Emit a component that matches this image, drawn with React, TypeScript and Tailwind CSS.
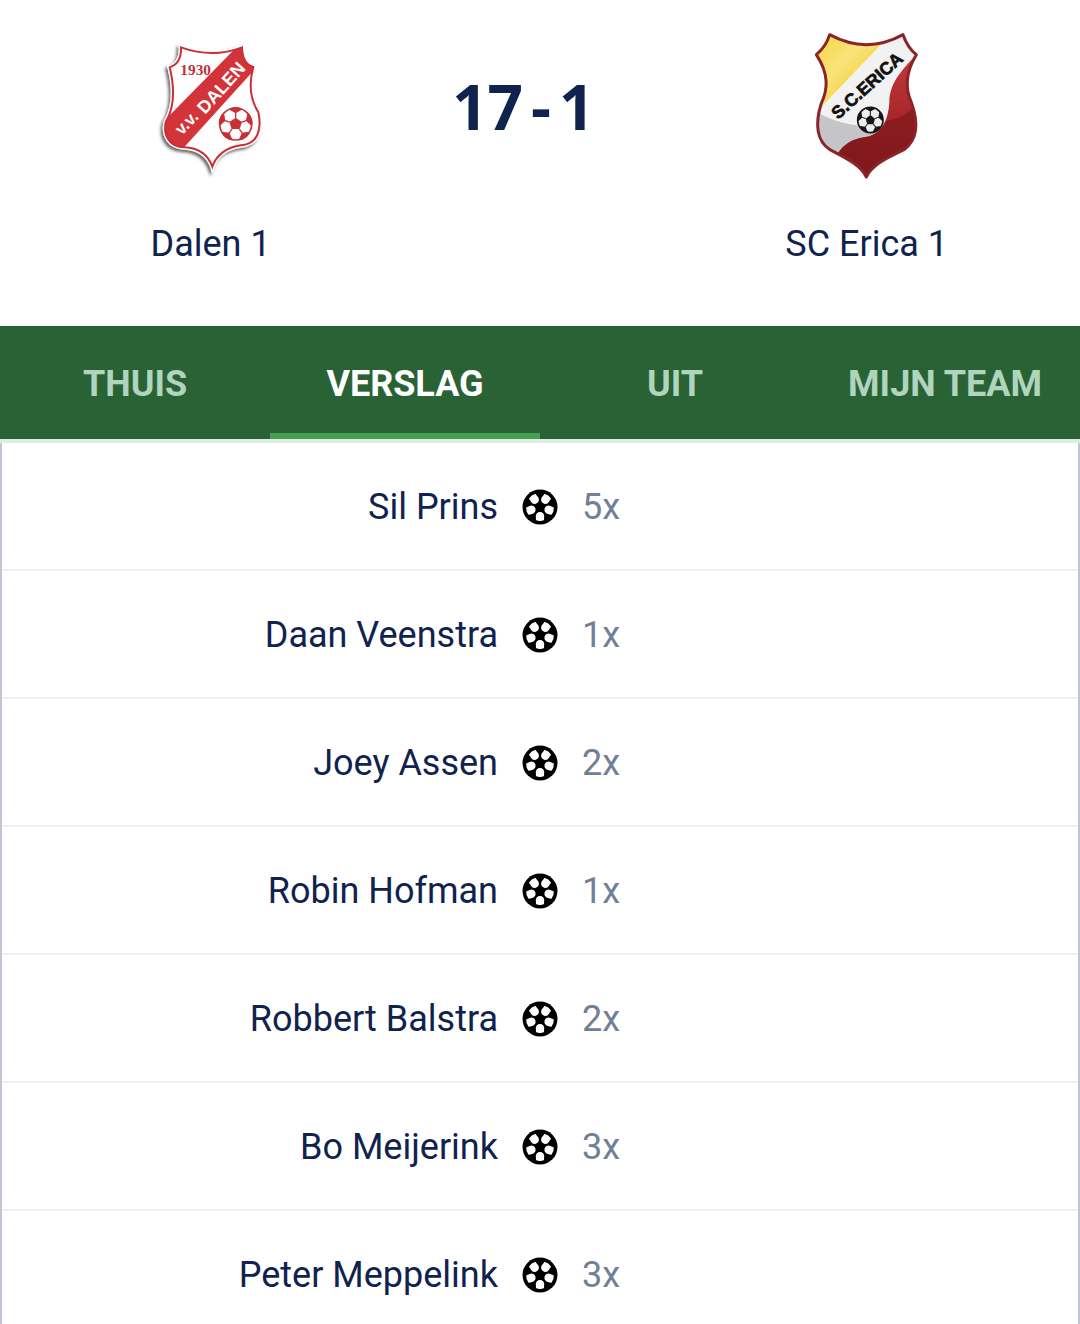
import { useState } from "react";

interface Scorer {
  id: number;
  name: string;
  goals: number;
}

const tabs: string[] = ["Thuis", "Verslag", "Uit", "Mijn team"];

const scorers: Scorer[] = [
  { id: 1, name: "Sil Prins", goals: 5 },
  { id: 2, name: "Daan Veenstra", goals: 1 },
  { id: 3, name: "Joey Assen", goals: 2 },
  { id: 4, name: "Robin Hofman", goals: 1 },
  { id: 5, name: "Robbert Balstra", goals: 2 },
  { id: 6, name: "Bo Meijerink", goals: 3 },
  { id: 7, name: "Peter Meppelink", goals: 3 },
];

const spokes = [0, 72, 144, 216, 288];

const dalenOutline =
  "M90 40 Q185 74 273 40 Q274 90 307 99 C290 160 300 200 322 235 C334 290 318 330 270 334 C225 340 195 365 184 398 C172 365 145 342 100 340 C55 338 36 305 44 265 C68 225 72 165 56 100 Q92 88 90 40Z";

const ericaOutline =
  "M77 32 Q188 92 297 32 Q310 70 337 92 C302 150 306 200 322 235 C345 300 338 350 300 377 C255 400 205 420 187 459 C168 420 120 400 78 377 C38 352 32 300 52 238 C72 195 75 150 37 92 Q66 68 77 32Z";

const DalenLogo = () => (
  <svg viewBox="0 -30 360 480" className="h-40 w-[120px]" role="img" aria-label="Dalen">
    <defs>
      <clipPath id="dalen-shield">
        <path d={dalenOutline} />
      </clipPath>
      <filter id="dalen-shadow" x="-10%" y="-10%" width="120%" height="125%">
        <feDropShadow dx="-6" dy="7" stdDeviation="4" floodColor="#333" floodOpacity="0.75" />
      </filter>
    </defs>
    <path d={dalenOutline} fill="#fff" stroke="#fff" strokeWidth="14" filter="url(#dalen-shadow)" />
    <g clipPath="url(#dalen-shield)">
      <path d="M262 34 L318 99 L94 346 L20 320 L34 266Z" fill="#d3343a" />
    </g>
    <path d={dalenOutline} fill="none" stroke="#c92f36" strokeWidth="6" />
    <text x="88" y="124" fontSize="46" fontWeight="700" fill="#bd343b" fontFamily="Liberation Serif, serif">
      1930
    </text>
    <text
      x="92"
      y="305"
      fontSize="50"
      fontWeight="700"
      fill="#fff"
      fontFamily="Liberation Sans, sans-serif"
      transform="rotate(-45 92 305)"
    >
      v.v.
    </text>
    <text
      x="162"
      y="243"
      fontSize="54"
      fontWeight="700"
      fill="#fff"
      fontFamily="Liberation Sans, sans-serif"
      transform="rotate(-48 162 243)"
    >
      DALEN
    </text>
    <circle cx="254" cy="270" r="48" fill="#fff" stroke="#c92f36" strokeWidth="5" />
    <path d="M254 251 L273 264 L266 285 L242 285 L235 264Z" fill="#c92f36" />
    {spokes.map((angle) => (
      <g key={angle} transform={`rotate(${angle} 254 270)`}>
        <path d="M254 251 V234" stroke="#c92f36" strokeWidth="4" />
        <path d="M236 226 L254 236 L272 226 L268 223 Q254 218 240 223Z" fill="#c92f36" stroke="#c92f36" strokeWidth="3" />
      </g>
    ))}
  </svg>
);

const EricaLogo = () => (
  <svg viewBox="0 0 375 480" className="h-40 w-[125px]" role="img" aria-label="SC Erica">
    <defs>
      <linearGradient id="erica-yellow" x1="0" y1="0" x2="1" y2="1">
        <stop offset="0" stopColor="#f8d32e" />
        <stop offset="0.4" stopColor="#f9e27a" />
        <stop offset="0.7" stopColor="#f4cf2f" />
      </linearGradient>
      <linearGradient id="erica-red" x1="0" y1="0" x2="0" y2="1">
        <stop offset="0" stopColor="#c4393b" />
        <stop offset="0.5" stopColor="#a8272a" />
        <stop offset="1" stopColor="#8e1d20" />
      </linearGradient>
      <clipPath id="erica-shield">
        <path d={ericaOutline} />
      </clipPath>
    </defs>
    <g clipPath="url(#erica-shield)">
      <rect width="375" height="480" fill="#f2f2f2" />
      <path d="M0 0 H290 L60 240 L0 290Z" fill="url(#erica-yellow)" />
      <path d="M30 260 Q95 300 170 305 L240 320 L100 390 L20 380Z" fill="#c5c5c7" />
      <path
        d="M345 85 C290 140 256 180 256 235 C252 300 225 335 180 340 C145 345 120 360 100 390 L187 470 L360 400Z"
        fill="url(#erica-red)"
      />
      <path
        d="M244 292 C230 325 205 338 180 340 C145 345 120 360 100 390 L187 470 L350 400 L345 235 Q300 285 244 292Z"
        fill="#6d1215"
        opacity="0.5"
      />
    </g>
    <path d={ericaOutline} fill="none" stroke="#8b2429" strokeWidth="9" strokeLinejoin="round" />
    <text
      x="102"
      y="288"
      fontSize="53"
      fontWeight="700"
      fill="#111"
      stroke="#111"
      strokeWidth="2"
      fontFamily="Liberation Sans, sans-serif"
      transform="rotate(-42 102 288)"
    >
      S.C.ERICA
    </text>
    <circle cx="199" cy="288" r="38" fill="#eee" stroke="#151515" strokeWidth="5" />
    <path d="M199 273 L213 284 L208 301 L190 301 L185 284Z" fill="#151515" />
    {spokes.map((angle) => (
      <g key={angle} transform={`rotate(${angle} 199 288)`}>
        <path d="M199 273 V260" stroke="#151515" strokeWidth="3" />
        <path d="M186 254 L199 261 L212 254 Q199 247 186 254Z" fill="#151515" stroke="#151515" strokeWidth="3" />
      </g>
    ))}
  </svg>
);

const BallIcon = () => (
  <svg viewBox="0 0 36 36" className="size-9" aria-hidden="true">
    <circle cx="18" cy="18" r="17.5" fill="#000" />
    {spokes.map((angle) => (
      <path
        key={angle}
        d="M14.5 26.6 Q15.2 23.6 18 23.6 Q20.8 23.6 21.5 26.6 L21.3 30.7 Q18 32 14.7 30.7Z"
        fill="#fff"
        stroke="#fff"
        strokeWidth="1.4"
        strokeLinejoin="round"
        transform={`rotate(${angle} 18 18)`}
      />
    ))}
  </svg>
);

const App: React.FC = () => {
  const [active, setActive] = useState<string>("Verslag");

  return (
    <main className="min-h-screen overflow-hidden bg-white font-[Roboto,sans-serif] text-4xl text-[#10234f]">
      <header className="grid grid-cols-[78fr_43fr_79fr] pt-6 pb-[62px]">
        <div className="flex flex-col items-center gap-10">
          <DalenLogo />
          <h2>Dalen 1</h2>
        </div>
        <div className="flex h-40 items-center justify-center gap-2 pt-1 pr-7 font-['Open_Sans',sans-serif] text-[62px] font-bold">
          <span>17</span>
          <span>-</span>
          <span>1</span>
        </div>
        <div className="flex flex-col items-center gap-10">
          <EricaLogo />
          <h2>SC Erica 1</h2>
        </div>
      </header>

      <nav className="grid grid-cols-4 border-b-4 border-[#dceee2] bg-[#296235]">
        {tabs.map((tab) => (
          <button
            key={tab}
            type="button"
            onClick={() => setActive(tab)}
            className={`h-[113px] cursor-pointer border-b-6 pt-2 font-bold whitespace-nowrap uppercase ${
              active === tab ? "border-[#45a052] text-white" : "border-transparent text-[#b0d4be]"
            }`}
          >
            {tab}
          </button>
        ))}
      </nav>

      <ul className="border-x-2 border-[#bfc6d2]">
        {scorers.map((scorer) => (
          <li
            key={scorer.id}
            className="grid h-32 grid-cols-[1fr_auto_1fr] items-center gap-6 border-b-2 border-[#edf0f4] pt-0.5"
          >
            <span className="text-right">{scorer.name}</span>
            <BallIcon />
            <span className="text-[#718096]">{scorer.goals}x</span>
          </li>
        ))}
      </ul>
    </main>
  );
};

export default App;
